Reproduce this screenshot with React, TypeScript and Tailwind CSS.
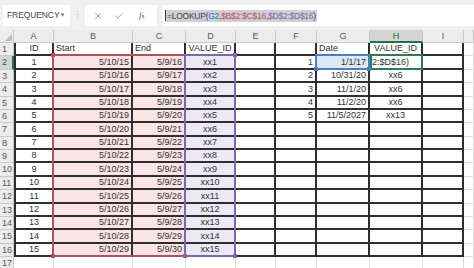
import { X, Check } from "lucide-react";

const COLS = ["A", "B", "C", "D", "E", "F", "G", "H", "I", "J"];

type CellData = { text?: string; align?: "l" | "c" | "r"; bg?: string };

const gDates = ["1/1/17", "10/31/20", "11/1/20", "11/2/20", "11/5/2027"];
const hVals = ["2:$D$16)", "xx6", "xx6", "xx6", "xx13"];

function getCell(r: number, c: number): CellData {
  const col = COLS[c];
  if (r === 1) {
    if (col === "A") return { text: "ID", align: "c" };
    if (col === "B") return { text: "Start", align: "l" };
    if (col === "C") return { text: "End", align: "l" };
    if (col === "D") return { text: "VALUE_ID", align: "c" };
    if (col === "G") return { text: "Date", align: "l" };
    if (col === "H") return { text: "VALUE_ID", align: "c" };
    return {};
  }
  if (r >= 2 && r <= 16) {
    if (col === "A") return { text: String(r - 1), align: "c" };
    if (col === "B") return { text: `5/10/${13 + r}`, align: "r", bg: "pink" };
    if (col === "C") return { text: `5/9/${14 + r}`, align: "r", bg: "pink" };
    if (col === "D") return { text: `xx${r - 1}`, align: "c", bg: "lav" };
    if (r <= 6) {
      if (col === "F") return { text: String(r - 1), align: "r" };
      if (col === "G") return { text: gDates[r - 2], align: "r", bg: r === 2 ? "blue" : undefined };
      if (col === "H") return { text: hVals[r - 2], align: r === 2 ? "l" : "c" };
    }
  }
  return {};
}

function Cell({ r, c }: { r: number; c: number }) {
  const d = getCell(r, c);
  const thick = r <= 16 && c <= 8;
  return (
    <div
      className={[
        "overflow-hidden whitespace-nowrap px-[2px] text-[9px] leading-[12px] text-[#333] flex items-end",
        thick ? "border-r-2 border-b-2 border-[#2e2e2e]" : "border-r border-b border-[#dcdcdc]",
        thick && c === 0 ? "border-l-2" : "",
        d.align === "c" ? "justify-center" : d.align === "r" ? "justify-end" : "justify-start",
        d.bg === "pink" ? "bg-[#fbe4e5]" : d.bg === "lav" ? "bg-[#ede8f5]" : d.bg === "blue" ? "bg-[#dde8f4]" : "bg-white",
      ].join(" ")}
    >
      {d.text}
    </div>
  );
}

export default function App() {
  const rows = Array.from({ length: 17 }, (_, i) => i + 1);
  return (
    <div className="w-[474px] h-[268px] overflow-hidden bg-white font-['Liberation_Sans',sans-serif]">
      {/* formula bar */}
      <div className="h-[30px] bg-[#f0f0f0] flex items-start pt-[5px] pl-[3px]">
        <div className="w-[67px] h-[21px] bg-white flex items-center pl-[4px] pr-[6px] justify-between">
          <span className="text-[8.5px] text-[#444] tracking-[-0.1px]">FREQUENCY</span>
          <span className="text-[6px] text-[#777]">▼</span>
        </div>
        <div className="w-[15px] h-[21px] flex items-center justify-center text-[9px] text-[#b4b4b4]">⋮</div>
        <div className="w-[72px] h-[21px] bg-white flex items-center pl-[8px] text-[#666]">
          <X size={10} strokeWidth={1.4} />
          <span className="ml-[11px]">
            <Check size={10} strokeWidth={1.4} />
          </span>
          <span className="ml-[15px] font-['Liberation_Serif',serif] italic text-[9px] text-[#555]">
            f<span className="text-[6px] not-italic">x</span>
          </span>
        </div>
        <div className="ml-[6px] flex-1 h-[21px] bg-white flex items-center pl-[2px]">
          <span className="w-px h-[11px] bg-[#333]" />
          <span className="bg-[#cdcfd6] text-[8.5px] leading-[12px] tracking-[-0.25px] px-[1px] text-[#444]">
            =LOOKUP(<span className="text-[#3b70b6]">G2</span>,<span className="text-[#c0504d]">$B$2:$C$16</span>,
            <span className="text-[#8064a2]">$D$2:$D$16</span>)
          </span>
        </div>
      </div>

      {/* sheet */}
      <div className="relative">
        <div className="grid grid-cols-[14px_40px_79px_53px_50px_40px_41px_53px_53px_41px_1fr] grid-rows-[13px_repeat(17,13.375px)]">
          <div className="bg-[#ececec] border-r border-b border-[#c9c9c9] flex items-end justify-end p-[1px]">
            <svg width="7" height="7" viewBox="0 0 7 7">
              <polygon points="7,0 7,7 0,7" fill="#bdbdbd" />
            </svg>
          </div>
          {COLS.map((c) => (
            <div
              key={c}
              className={
                c === "H"
                  ? "bg-[#d4d4d4] border-r border-[#c9c9c9] border-b-2 border-b-[#217346] text-center text-[9px] leading-[12px] text-[#1e6b40]"
                  : "bg-[#ececec] border-r border-b border-[#c9c9c9] text-center text-[9px] leading-[12px] text-[#555]"
              }
            >
              {c === "J" ? "" : c}
            </div>
          ))}
          {rows.map((r) => (
            <div key={r} className="contents">
              <div
                className={
                  r === 2
                    ? "bg-[#d4d4d4] border-b border-[#c9c9c9] border-r-2 border-r-[#217346] pl-[2px] text-[9px] leading-[12px] text-[#1e6b40]"
                    : "bg-[#ececec] border-r border-b border-[#c9c9c9] pl-[2px] text-[9px] leading-[12px] text-[#555]"
                }
              >
                {r}
              </div>
              {COLS.map((_, c) => (
                <Cell key={c} r={r} c={c} />
              ))}
            </div>
          ))}
        </div>

        {/* range highlights */}
        <div className="absolute left-[52px] top-[24.4px] w-[134px] h-[202.6px] border-2 border-[#b5505a] pointer-events-none" />
        <div className="absolute left-[184px] top-[24.4px] w-[52px] h-[202.6px] border-2 border-[#7d68ac] pointer-events-none" />
        <div className="absolute left-[315px] top-[24.4px] w-[55px] h-[15.4px] border-2 border-[#4a7ebf] pointer-events-none" />
        <div className="absolute left-[370px] top-[24.4px] w-[53px] h-[15.4px] border-2 border-[#2f7a55] pointer-events-none" />

        {/* range handles */}
        <div className="absolute left-[51px] top-[23.4px] w-[4px] h-[4px] bg-[#b5505a]" />
        <div className="absolute left-[51px] top-[224px] w-[4px] h-[4px] bg-[#b5505a]" />
        <div className="absolute left-[183px] top-[224px] w-[4px] h-[4px] bg-[#7d68ac]" />
        <div className="absolute left-[233px] top-[224px] w-[4px] h-[4px] bg-[#7d68ac]" />
        <div className="absolute left-[233px] top-[23.4px] w-[4px] h-[4px] bg-[#7d68ac]" />
        <div className="absolute left-[314px] top-[37px] w-[4px] h-[4px] bg-[#4a7ebf]" />
        <div className="absolute left-[367px] top-[37px] w-[4px] h-[4px] bg-[#4a7ebf]" />
      </div>
    </div>
  );
}
